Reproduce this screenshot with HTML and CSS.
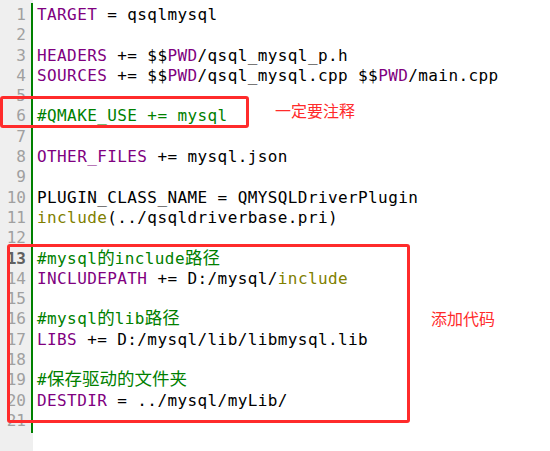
FILE: index.html
```html
<!DOCTYPE html>
<html>
<head>
<meta charset="utf-8">
<link rel="stylesheet" href="styles.css">
</head>
<body>
<div class="editor">
  <div class="gutter">
    <div class="nums">
      <div>1</div><div>2</div><div>3</div><div>4</div><div>5</div><div>6</div><div>7</div><div>8</div><div>9</div><div>10</div><div>11</div><div>12</div><div class="cur">13</div><div>14</div><div>15</div><div>16</div><div>17</div><div>18</div><div>19</div><div>20</div><div>21</div>
    </div>
  </div>
  <div class="code">
    <div class="ln"><span class="kw">TARGET</span> = qsqlmysql</div>
    <div class="ln">&nbsp;</div>
    <div class="ln"><span class="kw">HEADERS</span> += $$<span class="kw">PWD</span>/qsql_mysql_p.h</div>
    <div class="ln"><span class="kw">SOURCES</span> += $$<span class="kw">PWD</span>/qsql_mysql.cpp $$<span class="kw">PWD</span>/main.cpp</div>
    <div class="ln">&nbsp;</div>
    <div class="ln cm">#QMAKE_USE += mysql</div>
    <div class="ln">&nbsp;</div>
    <div class="ln"><span class="kw">OTHER_FILES</span> += mysql.json</div>
    <div class="ln">&nbsp;</div>
    <div class="ln">PLUGIN_CLASS_NAME = QMYSQLDriverPlugin</div>
    <div class="ln"><span class="fn">include</span>(../qsqldriverbase.pri)</div>
    <div class="ln">&nbsp;</div>
    <div class="ln cm">#mysql<span class="cjk">的</span>include<span class="cjk">路径</span></div>
    <div class="ln"><span class="kw">INCLUDEPATH</span> += D:/mysql/<span class="fn">include</span></div>
    <div class="ln">&nbsp;</div>
    <div class="ln cm">#mysql<span class="cjk">的</span>lib<span class="cjk">路径</span></div>
    <div class="ln"><span class="kw">LIBS</span> += D:/mysql/lib/libmysql.lib</div>
    <div class="ln">&nbsp;</div>
    <div class="ln cm">#<span class="cjk">保存驱动的文件夹</span></div>
    <div class="ln"><span class="kw">DESTDIR</span> = ../mysql/myLib/</div>
    <div class="ln">&nbsp;</div>
  </div>
</div>
<div class="box box-one"></div>
<div class="note note-one">一定要注释</div>
<div class="box box-two"></div>
<div class="note note-two">添加代码</div>
</body>
</html>
```

FILE: styles.css
```css
html, body {
  margin: 0;
  padding: 0;
  background: #ffffff;
}
body {
  width: 550px;
  height: 451px;
  overflow: hidden;
  position: relative;
  font-family: "DejaVu Sans Mono", "Liberation Mono", "Noto Sans CJK SC", monospace;
  font-size: 16px;
  letter-spacing: 0.4px;
  color: #000000;
}
.editor {
  display: flex;
  height: 451px;
}
.gutter {
  width: 33px;
  background: #efefef;
  flex: none;
}
.nums {
  margin-top: 3px;
  padding: 2px 5px 2px 0;
  border-right: 2px solid #008000;
  text-align: right;
  color: #a0a0a0;
  line-height: 20.3px;
  letter-spacing: 0;
}
.nums .cur {
  color: #606060;
  font-weight: bold;
}
.code {
  padding: 5px 0 0 4px;
  line-height: 20.3px;
}
.ln {
  white-space: pre;
  height: 20.3px;
}
.kw { color: #800080; }
.fn { color: #808000; }
.cm { color: #008000; }
.cjk {
  font-family: "Noto Sans CJK SC", sans-serif;
  font-size: 17.5px;
  letter-spacing: 0;
  line-height: 10px;
}
.box {
  position: absolute;
  border: 3px solid #ff2b2b;
  border-radius: 3px;
  box-sizing: border-box;
}
.box-one {
  left: 0;
  top: 96px;
  width: 249px;
  height: 32px;
}
.box-two {
  left: 7px;
  top: 244px;
  width: 403px;
  height: 179px;
}
.note {
  position: absolute;
  font-family: "Noto Sans CJK SC", sans-serif;
  font-size: 16px;
  letter-spacing: 0;
  color: #ff2b2b;
  line-height: 20px;
}
.note-one {
  left: 275px;
  top: 100px;
}
.note-two {
  left: 431px;
  top: 308px;
}
```
